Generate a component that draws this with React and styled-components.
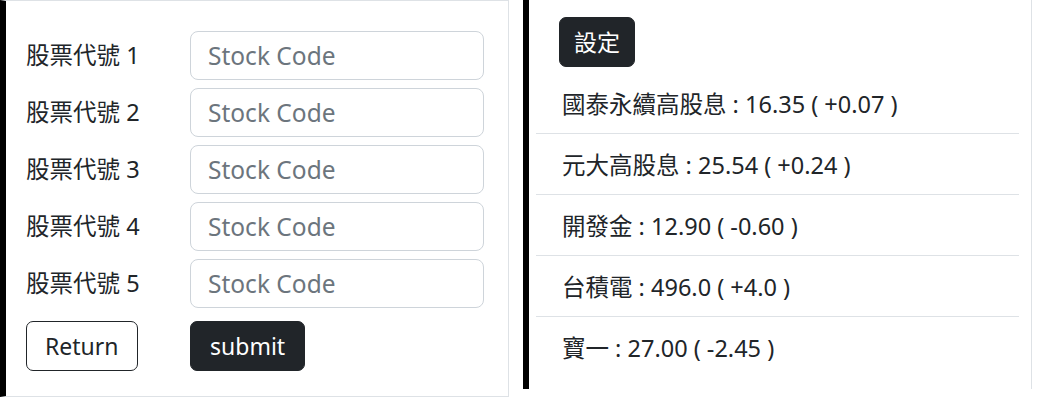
import { Fragment } from "react";
import styled, { createGlobalStyle } from "styled-components";

const GlobalStyle = createGlobalStyle`
    body{
        margin: 0;
        background: #fff;
        font-family: "Noto Sans", "Noto Sans CJK TC", sans-serif;
        color: #212529;
    }
`;

const Page = styled.div`
    width: 1045px;
    display: grid;
    grid-template-columns: 523px 522px;
`;

const FormPanel = styled.div`
    width: 509px;
    height: 397px;
    box-sizing: border-box;
    border-left: 6px solid #000;
    border-top: 1px solid #dee2e6;
    border-right: 1px solid #dee2e6;
    border-bottom: 1px solid #dee2e6;
    padding: 30px 24px 0 20px;
`;

const FormGrid = styled.div`
    display: grid;
    grid-template-columns: 164px 294px;
    row-gap: 8px;
    align-items: center;
`;

const Label = styled.label`
    font-size: 23.5px;
    line-height: 1;
`;

const Input = styled.input`
    box-sizing: border-box;
    width: 294px;
    height: 49px;
    padding: 0 17px;
    border: 1px solid #ced4da;
    border-radius: 8px;
    font-family: inherit;
    font-size: 24.5px;
    color: #212529;
    outline: none;
    &::placeholder{
        color: #6c757d;
    }
`;

const ButtonRow = styled.div`
    grid-column: 1 / 3;
    display: grid;
    grid-template-columns: 164px auto;
    margin-top: 5px;
    justify-items: start;
`;

const Button = styled.button`
    height: 50px;
    padding: 0 ${p => p.$pad || 19}px;
    border-radius: 7px;
    font-family: inherit;
    font-size: ${p => p.$size || 23}px;
    line-height: 1;
    cursor: pointer;
    border: 1px solid #212529;
    background: ${p => p.$dark ? "#212529" : "#fff"};
    color: ${p => p.$dark ? "#fff" : "#212529"};
`;

const QuotePanel = styled.div`
    width: 509px;
    height: 389px;
    box-sizing: border-box;
    border-left: 6px solid #000;
    border-right: 1px solid #dee2e6;
    padding-top: 17px;
`;

const Toolbar = styled.div`
    padding-left: 30px;
`;

const List = styled.ul`
    list-style: none;
    margin: 6px 12px 0 7px;
    padding: 0;
`;

const Item = styled.li`
    height: 60px;
    display: flex;
    align-items: center;
    padding-left: 26px;
    font-size: 23.5px;
    border-bottom: 1px solid #dee2e6;
    &:last-child{
        border-bottom: none;
    }
`;

const quotes = [
    { name: "國泰永續高股息", price: "16.35", change: "+0.07" },
    { name: "元大高股息", price: "25.54", change: "+0.24" },
    { name: "開發金", price: "12.90", change: "-0.60" },
    { name: "台積電", price: "496.0", change: "+4.0" },
    { name: "寶一", price: "27.00", change: "-2.45" },
];

export default function App(){
    return(
        <>
            <GlobalStyle />
            <Page>
                <div>
                    <FormPanel>
                        <FormGrid>
                            { [1, 2, 3, 4, 5].map( n =>
                                <Fragment key={ n }>
                                    <Label>股票代號 { n }</Label>
                                    <Input placeholder="Stock Code" />
                                </Fragment>
                            )}
                            <ButtonRow>
                                <Button $pad={ 18 }>Return</Button>
                                <Button $dark>submit</Button>
                            </ButtonRow>
                        </FormGrid>
                    </FormPanel>
                </div>
                <div>
                    <QuotePanel>
                        <Toolbar>
                            <Button $dark $size={ 23 } $pad={ 14 }>設定</Button>
                        </Toolbar>
                        <List>
                            { quotes.map( (q, index) =>
                                <Item key={ index }>{ `${q.name} : ${q.price} ( ${q.change} )` }</Item>
                            )}
                        </List>
                    </QuotePanel>
                </div>
            </Page>
        </>
    );
}
